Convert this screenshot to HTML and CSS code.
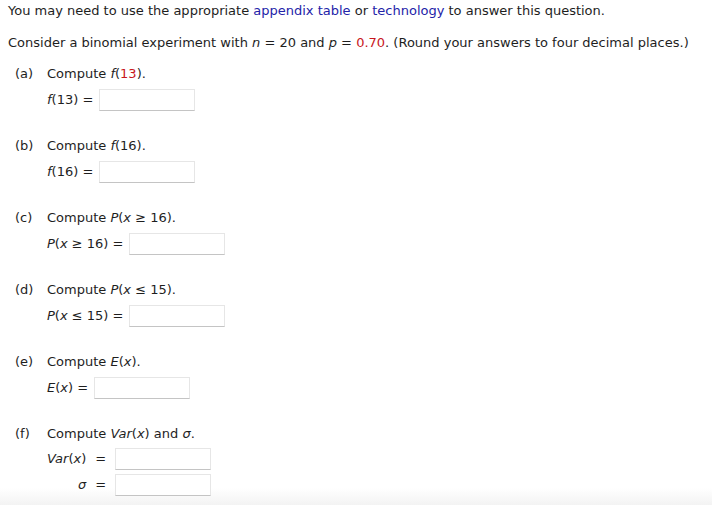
FILE: index.html
```html
<!DOCTYPE html>
<html>
<head>
<meta charset="utf-8">
<link rel="stylesheet" href="styles.css">
</head>
<body>
<p class="intro">You may need to use the appropriate <a class="link">appendix table</a> or <a class="link">technology</a> to answer this question.</p>
<p class="intro second">Consider a binomial experiment with <i>n</i> = 20 and <i>p</i> = <span class="red">0.70</span>. (Round your answers to four decimal places.)</p>

<div class="part first">
  <span class="plabel">(a)</span>
  <div class="pbody">
    <div class="head">Compute <i>f</i>(<span class="red">13</span>).</div>
    <div class="ans"><span class="lbl"><i>f</i>(13) =</span><span class="box"></span></div>
  </div>
</div>

<div class="part">
  <span class="plabel">(b)</span>
  <div class="pbody">
    <div class="head">Compute <i>f</i>(16).</div>
    <div class="ans"><span class="lbl"><i>f</i>(16) =</span><span class="box"></span></div>
  </div>
</div>

<div class="part">
  <span class="plabel">(c)</span>
  <div class="pbody">
    <div class="head">Compute <i>P</i>(<i>x</i> ≥ 16).</div>
    <div class="ans"><span class="lbl"><i>P</i>(<i>x</i> ≥ 16) =</span><span class="box"></span></div>
  </div>
</div>

<div class="part">
  <span class="plabel">(d)</span>
  <div class="pbody">
    <div class="head">Compute <i>P</i>(<i>x</i> ≤ 15).</div>
    <div class="ans"><span class="lbl"><i>P</i>(<i>x</i> ≤ 15) =</span><span class="box"></span></div>
  </div>
</div>

<div class="part">
  <span class="plabel">(e)</span>
  <div class="pbody">
    <div class="head">Compute <i>E</i>(<i>x</i>).</div>
    <div class="ans"><span class="lbl"><i>E</i>(<i>x</i>) =</span><span class="box"></span></div>
  </div>
</div>

<div class="part">
  <span class="plabel">(f)</span>
  <div class="pbody">
    <div class="head">Compute <i>Var</i>(<i>x</i>) and <i>σ</i>.</div>
    <div class="grid">
      <span class="gl"><i>Var</i>(<i>x</i>)</span><span class="eq">=</span><span class="box"></span>
      <span class="gl"><i>σ</i></span><span class="eq">=</span><span class="box"></span>
    </div>
  </div>
</div>
</body>
</html>
```

FILE: styles.css
```css
html {
  background: linear-gradient(to bottom, #ffffff 488px, #f3f3f3 505px);
  min-height: 100%;
}
body {
  margin: 0;
  padding: 1px 8px 0 8px;
  font-family: "DejaVu Sans", Verdana, sans-serif;
  font-size: 13px;
  color: #1e1e1e;
}
.intro {
  margin: 0;
  line-height: 20px;
}
.intro.second {
  margin-top: 12px;
}
.link {
  color: #2323a8;
  text-decoration: none;
}
.red {
  color: #c8161d;
}
.part {
  display: flex;
  margin-top: 25px;
  line-height: 20px;
}
.part.first {
  margin-top: 11px;
}
.plabel {
  width: 32px;
  padding-left: 7px;
}
.head {
  height: 20px;
}
.ans {
  display: flex;
  align-items: center;
  margin-top: 4px;
  height: 23px;
}
.lbl {
  margin-right: 6px;
}
.box {
  display: block;
  width: 94px;
  height: 20px;
  border: 1px solid #e6e6e6;
  border-bottom-color: #c4c4c4;
  background: #fff;
}
.grid {
  display: grid;
  grid-template-columns: auto auto auto;
  justify-content: start;
  align-items: center;
  row-gap: 4px;
  margin-top: 4px;
}
.gl {
  text-align: right;
}
.eq {
  padding: 0 9px 0 9px;
}
```
